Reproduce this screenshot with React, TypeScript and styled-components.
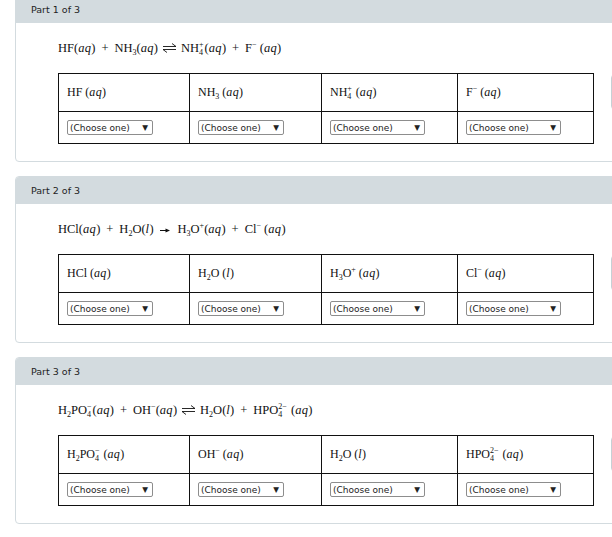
import React from "react";
import styled, { createGlobalStyle } from "styled-components";

const GlobalStyle = createGlobalStyle`
  html, body {
    margin: 0;
    padding: 0;
    background: #fff;
    overflow: hidden;
  }
  body {
    font-family: "DejaVu Sans", Verdana, sans-serif;
    color: #222;
  }
`;

const Page = styled.div`
  display: flex;
  flex-direction: column;
  gap: 14px;
  padding-left: 15px;
  margin-top: -5px;
`;

const Card = styled.section`
  width: 640px;
  flex-shrink: 0;
  border: 1px solid #d3dbdf;
  border-radius: 4px;
  overflow: hidden;
`;

const CardHeader = styled.header`
  height: 27px;
  display: flex;
  align-items: center;
  padding-left: 15px;
  background: #d3dbdf;
  font-size: 9.5px;
  color: #1e1e1e;
`;

const CardBody = styled.div`
  display: flex;
  flex-direction: column;
  gap: 15px;
  padding: 15px 0 17px 42px;
`;

const Equation = styled.div`
  height: 20px;
  line-height: 20px;
  font-family: "Liberation Serif", "Times New Roman", serif;
  font-size: 12.5px;
  color: #111;
  white-space: nowrap;
`;

const Op = styled.span`
  display: inline-block;
  margin: 0 6px;
`;

const ArrowBox = styled.svg<{ $w: number }>`
  width: ${({ $w }) => $w}px;
  height: 10px;
  margin: 0 4px;
  vertical-align: -1px;
  overflow: visible;
`;

// double harpoon for a reaction at equilibrium
const Equilibrium = () => (
  <ArrowBox $w={15} viewBox="0 0 15 10">
    <path
      d="M1 3.5h13M14 3.5l-4 -3M1 6.5h13M1 6.5l4 3"
      stroke="#111"
      strokeWidth="0.9"
      fill="none"
    />
  </ArrowBox>
);

// short one-way reaction arrow
const Forward = () => (
  <ArrowBox $w={10} viewBox="0 0 10 10" style={{ margin: "0 8px 0 6px" }}>
    <path d="M0 6.5h6" stroke="#111" strokeWidth="1" />
    <path d="M5.5 4.5L10 6.5L5.5 8.5z" fill="#111" />
  </ArrowBox>
);

const Ital = styled.i`
  font-style: italic;
  letter-spacing: 0.3px;
`;

const Sub = styled.sub`
  font-size: 8px;
  vertical-align: -3px;
  line-height: 0;
`;

const Sup = styled.sup`
  font-size: 8px;
  vertical-align: 5px;
  line-height: 0;
`;

const Stack = styled.span`
  display: inline-block;
  vertical-align: -3px;
  margin-right: 1px;
  font-size: 8px;
  line-height: 8px;

  > span {
    display: block;
  }
`;

const Row = styled.div`
  display: flex;
  align-items: flex-start;
`;

const Grid = styled.table`
  border-collapse: collapse;
  table-layout: fixed;
  font-family: "Liberation Serif", "Times New Roman", serif;
  font-size: 12px;
  color: #111;
`;

const HeadCell = styled.td<{ $w: number }>`
  width: ${({ $w }) => $w}px;
  height: 38px;
  box-sizing: border-box;
  padding: 0 8px;
  border: 1px solid #111;
  vertical-align: middle;
  white-space: nowrap;
`;

const PickCell = styled.td`
  height: 32px;
  box-sizing: border-box;
  padding: 0 8px;
  border: 1px solid #111;
  vertical-align: middle;
`;

const Select = styled.div<{ $wide?: boolean }>`
  width: ${({ $wide }) => ($wide ? 95 : 86)}px;
  height: 15px;
  box-sizing: border-box;
  display: flex;
  align-items: center;
  justify-content: space-between;
  padding: 0 4px 0 2px;
  border: 1px solid #8d8d8d;
  border-radius: 2px;
  background: #fff;
  font-family: "DejaVu Sans", Verdana, sans-serif;
  font-size: 9px;
  color: #222;

  > span {
    font-size: 7.5px;
  }
`;

const ToolPanel = styled.div`
  width: 40px;
  height: 34px;
  flex-shrink: 0;
  margin: 1px 0 0 17px;
  border: 1px solid #c6d0d5;
  border-radius: 4px;
`;

const widths = [131, 132, 136, 136];

const aq = (
  <>
    (<Ital>aq</Ital>)
  </>
);

const liq = (
  <>
    (<Ital>l</Ital>)
  </>
);

type Part = {
  equation: React.ReactNode;
  species: React.ReactNode[];
};

const parts: Part[] = [
  {
    equation: (
      <>
        HF{aq}
        <Op>+</Op>
        NH<Sub>3</Sub>
        {aq}
        <Equilibrium />
        NH
        <Stack>
          <span>+</span>
          <span>4</span>
        </Stack>
        {aq}
        <Op>+</Op>F<Sup>−</Sup> {aq}
      </>
    ),
    species: [
      <>HF {aq}</>,
      <>
        NH<Sub>3</Sub> {aq}
      </>,
      <>
        NH
        <Stack>
          <span>+</span>
          <span>4</span>
        </Stack>{" "}
        {aq}
      </>,
      <>
        F<Sup>−</Sup> {aq}
      </>,
    ],
  },
  {
    equation: (
      <>
        HCl{aq}
        <Op>+</Op>
        H<Sub>2</Sub>O{liq}
        <Forward />H<Sub>3</Sub>O<Sup>+</Sup>
        {aq}
        <Op>+</Op>Cl<Sup>−</Sup> {aq}
      </>
    ),
    species: [
      <>HCl {aq}</>,
      <>
        H<Sub>2</Sub>O {liq}
      </>,
      <>
        H<Sub>3</Sub>O<Sup>+</Sup> {aq}
      </>,
      <>
        Cl<Sup>−</Sup> {aq}
      </>,
    ],
  },
  {
    equation: (
      <>
        H<Sub>2</Sub>PO
        <Stack>
          <span>−</span>
          <span>4</span>
        </Stack>
        {aq}
        <Op>+</Op>
        OH<Sup>−</Sup>
        {aq}
        <Equilibrium />H<Sub>2</Sub>O{liq}
        <Op>+</Op>
        HPO
        <Stack>
          <span>2−</span>
          <span>4</span>
        </Stack>{" "}
        {aq}
      </>
    ),
    species: [
      <>
        H<Sub>2</Sub>PO
        <Stack>
          <span>−</span>
          <span>4</span>
        </Stack>{" "}
        {aq}
      </>,
      <>
        OH<Sup>−</Sup> {aq}
      </>,
      <>
        H<Sub>2</Sub>O {liq}
      </>,
      <>
        HPO
        <Stack>
          <span>2−</span>
          <span>4</span>
        </Stack>{" "}
        {aq}
      </>,
    ],
  },
];

const Choice = ({ wide }: { wide?: boolean }) => (
  <Select $wide={wide}>
    (Choose one)<span>▼</span>
  </Select>
);

export default function App() {
  return (
    <>
      <GlobalStyle />
      <Page>
        {parts.map((part, i) => (
          <Card key={i}>
            <CardHeader>
              Part {i + 1} of {parts.length}
            </CardHeader>
            <CardBody>
              <Equation>{part.equation}</Equation>
              <Row>
                <Grid>
                  <tbody>
                    <tr>
                      {part.species.map((s, j) => (
                        <HeadCell key={j} $w={widths[j]}>
                          {s}
                        </HeadCell>
                      ))}
                    </tr>
                    <tr>
                      {part.species.map((_, j) => (
                        <PickCell key={j}>
                          <Choice wide={j > 1} />
                        </PickCell>
                      ))}
                    </tr>
                  </tbody>
                </Grid>
                <ToolPanel />
              </Row>
            </CardBody>
          </Card>
        ))}
      </Page>
    </>
  );
}
